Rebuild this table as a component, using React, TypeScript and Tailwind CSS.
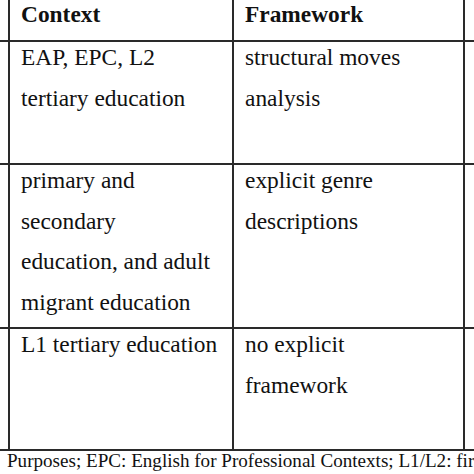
const ROWS = [
  {
    context: ["EAP, EPC, L2", "tertiary education"],
    framework: ["structural moves", "analysis"],
    height: "h-[123px]",
  },
  {
    context: ["primary and", "secondary", "education, and adult", "migrant education"],
    framework: ["explicit genre", "descriptions"],
    height: "h-[164px]",
  },
  {
    context: ["L1 tertiary education"],
    framework: ["no explicit", "framework"],
    height: "h-[122px]",
  },
];

function Lines({ lines }: { lines: string[] }) {
  return (
    <div className="-mt-[5px] pl-[11px] leading-[40.5px]">
      {lines.map((l) => (
        <div key={l}>{l}</div>
      ))}
    </div>
  );
}

export default function App() {
  return (
    <div
      className="h-[474px] w-[474px] overflow-hidden whitespace-nowrap bg-white text-[23.4px] text-[#111]"
      style={{ fontFamily: '"Liberation Serif", "Times New Roman", serif' }}
    >
      <div className="grid h-[42px] grid-cols-[8px_224px_231px_1fr] border-b-2 border-[#2a2a2a]">
        <div />
        <div className="border-l-2 border-[#2a2a2a] pl-[11px] pt-[2px] font-bold leading-[24px]">Context</div>
        <div className="border-l-2 border-[#2a2a2a] pl-[11px] pt-[2px] font-bold leading-[24px]">Framework</div>
        <div className="border-l-2 border-[#2a2a2a]" />
      </div>
      {ROWS.map((r) => (
        <div
          key={r.context[0]}
          className={`grid ${r.height} grid-cols-[8px_224px_231px_1fr] border-b-2 border-[#2a2a2a]`}
        >
          <div />
          <div className="border-l-2 border-[#2a2a2a]">
            <Lines lines={r.context} />
          </div>
          <div className="border-l-2 border-[#2a2a2a]">
            <Lines lines={r.framework} />
          </div>
          <div className="border-l-2 border-[#2a2a2a]" />
        </div>
      ))}
      <div className="pl-[7px] text-[19.1px] leading-[20px]">
        Purposes; EPC: English for Professional Contexts; L1/L2: first and second language
      </div>
    </div>
  );
}
